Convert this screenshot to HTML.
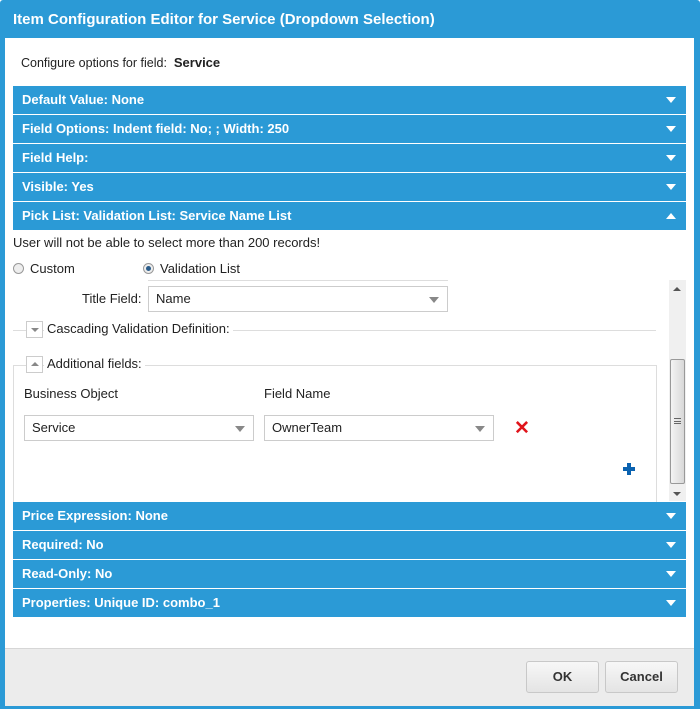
<!DOCTYPE html>
<html><head><style>
*{margin:0;padding:0;box-sizing:border-box}
body{width:700px;height:711px;background:#fff;font-family:"Liberation Sans",Arial,sans-serif;font-size:13px;color:#222;position:relative;overflow:hidden}
.frame{position:absolute;left:0;top:0;width:700px;height:709px;background:#2b9ad6;border-radius:3px 3px 0 0}
.title{position:absolute;left:13px;top:11px;color:#fff;font-weight:bold;font-size:15px}
.content{position:absolute;left:5px;top:38px;width:689px;height:610px;background:#fff}
.foot{position:absolute;left:5px;top:648px;width:689px;height:58px;background:#ececec;border-top:1px solid #d6d6d6}
.h{position:absolute;left:13px;width:673px;height:28px;background:#2b9ad6;color:#fff;font-weight:bold;font-size:13px;line-height:28px;padding-left:9px}
.h:after{content:"";position:absolute;right:10px;top:11px;border-left:5px solid transparent;border-right:5px solid transparent;border-top:6px solid #fff}
.h.up:after{border-top:none;border-bottom:6px solid #fff}
.abs{position:absolute}
.sel{position:absolute;height:26px;border:1px solid #ccc;background:#fff;font-size:13px;line-height:24px;padding-left:7px}
.sel:after{content:"";position:absolute;right:8px;top:10px;border-left:5px solid transparent;border-right:5px solid transparent;border-top:6px solid #888}
.btn{position:absolute;top:661px;height:32px;border:1px solid #c8c8c8;border-radius:3px;background:linear-gradient(#f7f7f7,#e4e4e4);font-weight:bold;font-size:13px;text-align:center;line-height:30px;color:#333}
.tog{position:absolute;width:17px;height:17px;border:1px solid #ccc;background:#fff}
</style></head><body>
<div class="frame"></div>
<div class="title">Item Configuration Editor for Service (Dropdown Selection)</div>
<div class="content"></div>
<div class="foot"></div>
<div class="abs" style="left:21px;top:55px;font-size:12.5px">Configure options for field:&nbsp; <b style="font-size:13px">Service</b></div>
<div class="h" style="top:86px">Default Value: None</div>
<div class="h" style="top:115px">Field Options: Indent field: No; ; Width: 250</div>
<div class="h" style="top:144px">Field Help:</div>
<div class="h" style="top:173px">Visible: Yes</div>
<div class="h up" style="top:202px">Pick List: Validation List: Service Name List</div>
<div class="abs" style="left:13px;top:235px;font-size:13px">User will not be able to select more than 200 records!</div>
<div class="abs" style="left:13px;top:263px;width:11px;height:11px;border-radius:50%;border:1px solid #999;background:#eee"></div>
<div class="abs" style="left:30px;top:261px">Custom</div>
<div class="abs" style="left:143px;top:263px;width:11px;height:11px;border-radius:50%;border:1px solid #999;background:#eee"><div style="position:absolute;left:2px;top:2px;width:5px;height:5px;border-radius:50%;background:#2a5c8a"></div></div>
<div class="abs" style="left:160px;top:261px">Validation List</div>
<div class="abs" style="left:148px;top:280px;width:300px;border-top:1px solid #ddd"></div>
<div class="abs" style="left:82px;top:291px">Title Field:</div>
<div class="sel" style="left:148px;top:286px;width:300px">Name</div>
<div class="abs" style="left:669px;top:280px;width:17px;height:221px;background:#f0f0f0"></div>
<div class="abs" style="left:673px;top:287px;border-left:4px solid transparent;border-right:4px solid transparent;border-bottom:4px solid #555"></div>
<div class="abs" style="left:673px;top:492px;border-left:4px solid transparent;border-right:4px solid transparent;border-top:4px solid #555"></div>
<div class="abs" style="left:670px;top:359px;width:15px;height:125px;border:1px solid #999;border-radius:2px;background:linear-gradient(90deg,#f4f4f4,#d8d8d8)"></div>
<div class="abs" style="left:674px;top:418px;width:7px;height:6px;border-top:1px solid #666;border-bottom:1px solid #666"><div style="margin-top:2px;border-top:1px solid #666"></div></div>
<div class="abs" style="left:13px;top:330px;width:643px;border-top:1px solid #ddd"></div>
<div class="tog" style="left:26px;top:321px"><div style="position:absolute;left:4px;top:6px;border-left:4px solid transparent;border-right:4px solid transparent;border-top:4px solid #888"></div></div>
<div class="abs" style="left:44px;top:321px;background:#fff;padding:0 3px">Cascading Validation Definition:</div>
<div class="abs" style="left:13px;top:365px;width:644px;height:137px;border:1px solid #ddd;border-bottom:none"></div>
<div class="tog" style="left:26px;top:356px"><div style="position:absolute;left:4px;top:5px;border-left:4px solid transparent;border-right:4px solid transparent;border-bottom:4px solid #888"></div></div>
<div class="abs" style="left:44px;top:356px;background:#fff;padding:0 3px">Additional fields:</div>
<div class="abs" style="left:24px;top:386px;font-size:13px">Business Object</div>
<div class="abs" style="left:264px;top:386px;font-size:13px">Field Name</div>
<div class="sel" style="left:24px;top:415px;width:230px">Service</div>
<div class="sel" style="left:264px;top:415px;width:230px">OwnerTeam</div>
<div class="abs" style="left:514px;top:418px;color:#e0141b;font-weight:bold;font-size:19px;line-height:22px">✕</div>
<div class="abs" style="left:623px;top:467px;width:12px;height:4px;background:#0a62b0"></div>
<div class="abs" style="left:627px;top:463px;width:4px;height:12px;background:#0a62b0"></div>
<div class="h" style="top:502px">Price Expression: None</div>
<div class="h" style="top:531px">Required: No</div>
<div class="h" style="top:560px">Read-Only: No</div>
<div class="h" style="top:589px">Properties: Unique ID: combo_1</div>
<div class="btn" style="left:526px;width:73px">OK</div>
<div class="btn" style="left:605px;width:73px">Cancel</div>
</body></html>
